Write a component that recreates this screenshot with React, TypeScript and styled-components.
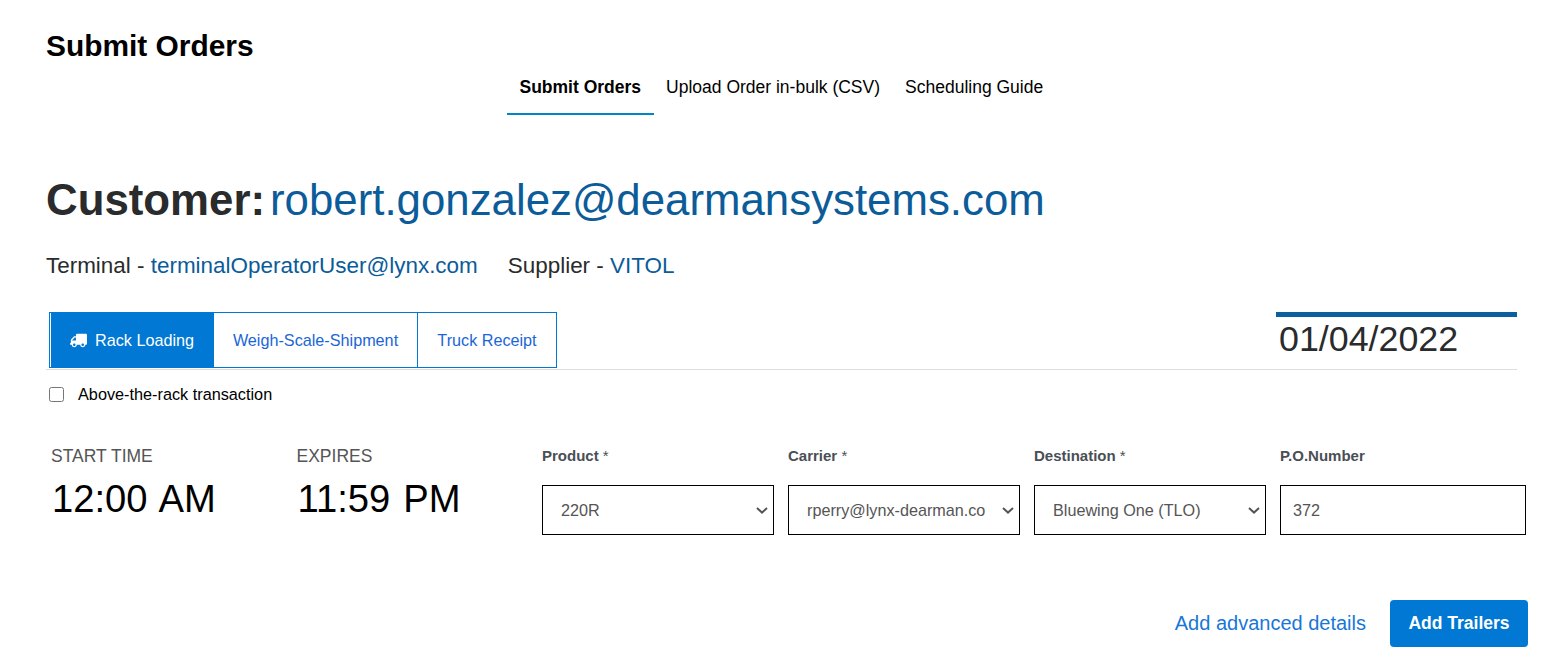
import React from 'react';
import styled, { createGlobalStyle } from 'styled-components';
import { FaTruck } from 'react-icons/fa';

const GlobalStyle = createGlobalStyle`
  html, body {
    margin: 0;
    padding: 0;
    background: #fff;
    font-family: 'Liberation Sans', Arial, sans-serif;
    overflow: hidden;
  }
`;

const chevron =
  "data:image/svg+xml,%3Csvg xmlns='http://www.w3.org/2000/svg' width='12' height='7' viewBox='0 0 12 7'%3E%3Cpath d='M1 1l5 4.6L11 1' fill='none' stroke='%23555' stroke-width='2'/%3E%3C/svg%3E";

const Page = styled.div`
  width: 1551px;
  height: 667px;
  box-sizing: border-box;
  padding: 29px 25px 0 46px;
`;

const PageTitle = styled.h1`
  margin: 0;
  font-size: 29.9px;
  line-height: 34px;
  font-weight: 700;
  color: #000;
`;

const TopNav = styled.nav`
  display: flex;
  margin: -1px 0 0 461px;
  height: 53px;
`;

const TopNavItem = styled.a<{ $active?: boolean }>`
  box-sizing: border-box;
  height: 53px;
  padding: 13px 12.5px 0;
  font-size: 17.5px;
  line-height: 24px;
  color: #000;
  font-weight: ${p => (p.$active ? 700 : 400)};
  border-bottom: 2px solid ${p => (p.$active ? '#0284c7' : 'transparent')};
`;

const CustomerLine = styled.div`
  display: flex;
  align-items: baseline;
  gap: 5px;
  margin-top: 59px;
  font-size: 43.8px;
  line-height: 52px;
`;

const CustomerLabel = styled.span`
  font-weight: 700;
  color: #292b2c;
`;

const AccentText = styled.span`
  color: #0b5c99;
`;

const MetaLine = styled.div`
  display: flex;
  gap: 30px;
  margin-top: 26px;
  font-size: 22.45px;
  line-height: 28px;
  color: #292b2c;
`;

const ModeRow = styled.div`
  display: flex;
  justify-content: space-between;
  align-items: flex-end;
  height: 57px;
  width: 1471px;
  margin-top: 32px;
  border-bottom: 1px solid #dedede;
`;

const ModeTabs = styled.div`
  display: flex;
  margin-left: 3px;
  height: 56px;
  align-self: flex-start;
  border: 1px solid #0078d4;
  box-sizing: border-box;
`;

const ModeTab = styled.button<{ $active?: boolean; $w: number }>`
  display: flex;
  align-items: center;
  justify-content: center;
  gap: 8px;
  width: ${p => p.$w}px;
  padding: 0;
  border: 0;
  border-left: 1px solid ${p => (p.$active ? '#fff' : '#0078d4')};
  background: ${p => (p.$active ? '#0078d4' : '#fff')};
  color: ${p => (p.$active ? '#fff' : '#1a66d8')};
  font-family: inherit;
  font-size: 16.2px;
`;

const TruckIcon = styled(FaTruck)`
  width: 17px;
  height: 17px;
  transform: scaleX(-1);
`;

const DateBox = styled.div`
  align-self: flex-start;
  box-sizing: border-box;
  width: 241px;
  height: 50px;
  border-top: 5px solid #0b5f9e;
  padding: 2px 0 0 3px;
  font-size: 35.8px;
  line-height: 40px;
  color: #292b2c;
`;

const CheckRow = styled.label`
  display: flex;
  align-items: center;
  gap: 14px;
  margin: 14px 0 0 3px;
  font-size: 16.25px;
  line-height: 20px;
  color: #000;
`;

const CheckBox = styled.input`
  width: 15px;
  height: 15px;
  margin: 0;
`;

const FormRow = styled.div`
  display: flex;
  margin: 41px 0 0 5px;
`;

const TimeCol = styled.div`
  flex: none;
  width: 245.5px;
`;

const TimeLabel = styled.div`
  font-size: 17.5px;
  line-height: 22px;
  color: #555;
`;

const TimeValue = styled.div`
  margin: 10px 0 0 1px;
  font-size: 38.2px;
  word-spacing: 2.5px;
  line-height: 44px;
  color: #000;
`;

const FieldGroup = styled.div`
  display: flex;
  gap: 14px;
`;

const Field = styled.div<{ $w: number }>`
  flex: none;
  width: ${p => p.$w}px;
`;

const FieldLabel = styled.div`
  font-size: 15px;
  line-height: 22px;
  font-weight: 700;
  color: #4a4f55;
  margin-bottom: 18px;
`;

const Star = styled.span`
  font-weight: 400;
`;

const Select = styled.select`
  box-sizing: border-box;
  width: 100%;
  height: 50px;
  padding: 0 34px 0 18px;
  border: 1px solid #000;
  border-radius: 0;
  appearance: none;
  background: #fff url("${chevron}") no-repeat right 5px center;
  color: #555;
  font-family: inherit;
  font-size: 16.2px;
  outline: 0;
`;

const TextInput = styled.input`
  box-sizing: border-box;
  width: 100%;
  height: 50px;
  padding: 0 0 0 12px;
  border: 1px solid #000;
  border-radius: 0;
  color: #555;
  font-family: inherit;
  font-size: 16.2px;
  outline: 0;
`;

const Actions = styled.div`
  display: flex;
  justify-content: flex-end;
  align-items: center;
  gap: 24px;
  width: 1482px;
  margin-top: 65px;
`;

const AdvancedLink = styled.a`
  font-size: 20px;
  color: #1976d8;
`;

const PrimaryButton = styled.button`
  width: 138px;
  height: 47px;
  border: 0;
  border-radius: 4px;
  background: #0078d4;
  color: #fff;
  font-family: inherit;
  font-size: 17.5px;
  font-weight: 700;
`;

export default function App() {
  return (
    <Page>
      <GlobalStyle />
      <PageTitle>Submit Orders</PageTitle>
      <TopNav>
        <TopNavItem $active>Submit Orders</TopNavItem>
        <TopNavItem>Upload Order in-bulk (CSV)</TopNavItem>
        <TopNavItem>Scheduling Guide</TopNavItem>
      </TopNav>

      <CustomerLine>
        <CustomerLabel>Customer:</CustomerLabel>
        <AccentText>robert.gonzalez@dearmansystems.com</AccentText>
      </CustomerLine>
      <MetaLine>
        <span>
          Terminal - <AccentText>terminalOperatorUser@lynx.com</AccentText>
        </span>
        <span>
          Supplier - <AccentText>VITOL</AccentText>
        </span>
      </MetaLine>

      <ModeRow>
        <ModeTabs>
          <ModeTab $active $w={163}>
            <TruckIcon />
            Rack Loading
          </ModeTab>
          <ModeTab $w={204}>Weigh-Scale-Shipment</ModeTab>
          <ModeTab $w={139}>Truck Receipt</ModeTab>
        </ModeTabs>
        <DateBox>01/04/2022</DateBox>
      </ModeRow>

      <CheckRow>
        <CheckBox type="checkbox" />
        Above-the-rack transaction
      </CheckRow>

      <FormRow>
        <TimeCol>
          <TimeLabel>START TIME</TimeLabel>
          <TimeValue>12:00 AM</TimeValue>
        </TimeCol>
        <TimeCol>
          <TimeLabel>EXPIRES</TimeLabel>
          <TimeValue>11:59 PM</TimeValue>
        </TimeCol>
        <FieldGroup>
          <Field $w={232}>
            <FieldLabel>Product <Star>*</Star></FieldLabel>
            <Select defaultValue="220R">
              <option>220R</option>
            </Select>
          </Field>
          <Field $w={232}>
            <FieldLabel>Carrier <Star>*</Star></FieldLabel>
            <Select defaultValue="rperry@lynx-dearman.com">
              <option>rperry@lynx-dearman.com</option>
            </Select>
          </Field>
          <Field $w={232}>
            <FieldLabel>Destination <Star>*</Star></FieldLabel>
            <Select defaultValue="Bluewing One (TLO)">
              <option>Bluewing One (TLO)</option>
            </Select>
          </Field>
          <Field $w={246}>
            <FieldLabel>P.O.Number</FieldLabel>
            <TextInput defaultValue="372" />
          </Field>
        </FieldGroup>
      </FormRow>

      <Actions>
        <AdvancedLink>Add advanced details</AdvancedLink>
        <PrimaryButton>Add Trailers</PrimaryButton>
      </Actions>
    </Page>
  );
}
